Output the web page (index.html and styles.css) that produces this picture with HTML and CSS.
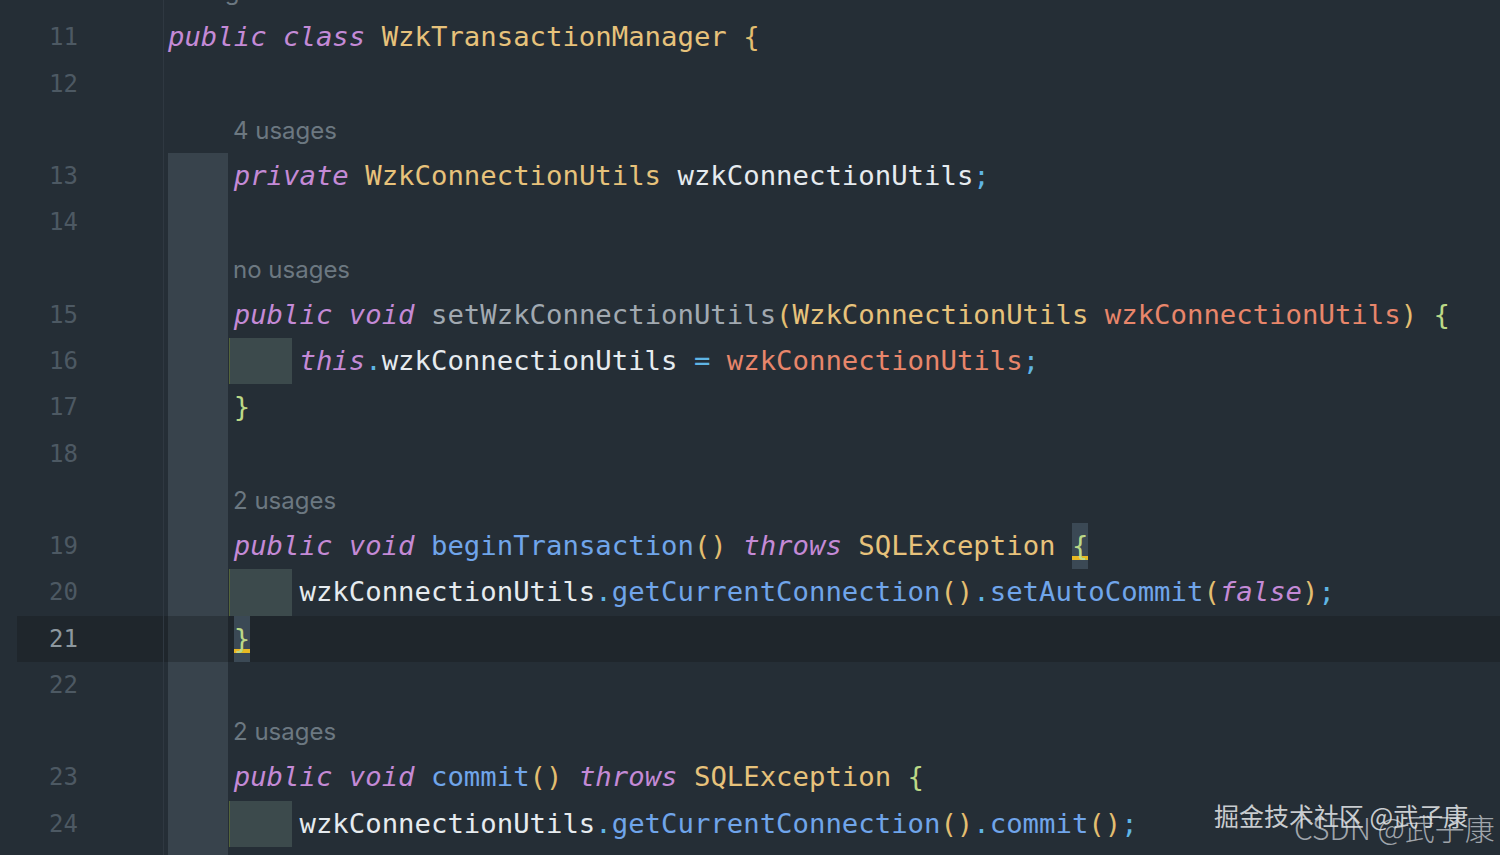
FILE: index.html
```html
<!DOCTYPE html>
<html>
<head>
<meta charset="utf-8">
<link rel="stylesheet" href="styles.css">
</head>
<body>
<div class="editor">
  <div class="row"><div class="ln"></div><div class="sep"></div><div class="code hint0"><span class="hint">1 usage</span></div></div>
  <div class="row"><div class="ln">11</div><div class="sep"></div><div class="code"><span class="k">public</span> <span class="k">class</span> <span class="c">WzkTransactionManager</span> <span class="y">{</span></div></div>
  <div class="row"><div class="ln">12</div><div class="sep"></div><div class="code"></div></div>
  <div class="row"><div class="ln"></div><div class="sep"></div><div class="code hint1"><span class="hint">4 usages</span></div></div>
  <div class="row"><div class="ln">13</div><div class="sep"></div><div class="code ind">    <span class="k">private</span> <span class="c">WzkConnectionUtils</span> <span class="f">wzkConnectionUtils</span><span class="p">;</span></div></div>
  <div class="row"><div class="ln">14</div><div class="sep"></div><div class="code ind"></div></div>
  <div class="row"><div class="ln"></div><div class="sep"></div><div class="code ind hint1"><span class="hint">no usages</span></div></div>
  <div class="row"><div class="ln">15</div><div class="sep"></div><div class="code ind">    <span class="k">public</span> <span class="k">void</span> <span class="g">setWzkConnectionUtils</span><span class="y">(</span><span class="c">WzkConnectionUtils</span> <span class="a">wzkConnectionUtils</span><span class="y">)</span> <span class="b">{</span></div></div>
  <div class="row"><div class="ln">16</div><div class="sep"></div><div class="code ind box">        <span class="k">this</span><span class="p">.</span><span class="f">wzkConnectionUtils</span> <span class="p">=</span> <span class="a">wzkConnectionUtils</span><span class="p">;</span></div></div>
  <div class="row"><div class="ln">17</div><div class="sep"></div><div class="code ind">    <span class="b">}</span></div></div>
  <div class="row"><div class="ln">18</div><div class="sep"></div><div class="code ind"></div></div>
  <div class="row"><div class="ln"></div><div class="sep"></div><div class="code ind hint1"><span class="hint">2 usages</span></div></div>
  <div class="row"><div class="ln">19</div><div class="sep"></div><div class="code ind">    <span class="k">public</span> <span class="k">void</span> <span class="m">beginTransaction</span><span class="y">()</span> <span class="k">throws</span> <span class="c">SQLException</span> <span class="match b">{</span></div></div>
  <div class="row"><div class="ln">20</div><div class="sep"></div><div class="code ind box">        <span class="f">wzkConnectionUtils</span><span class="p">.</span><span class="m">getCurrentConnection</span><span class="y">()</span><span class="p">.</span><span class="m">setAutoCommit</span><span class="y">(</span><span class="k">false</span><span class="y">)</span><span class="p">;</span></div></div>
  <div class="row cur"><div class="ln">21</div><div class="sep"></div><div class="code ind">    <span class="match b">}</span></div></div>
  <div class="row"><div class="ln">22</div><div class="sep"></div><div class="code ind"></div></div>
  <div class="row"><div class="ln"></div><div class="sep"></div><div class="code ind hint1"><span class="hint">2 usages</span></div></div>
  <div class="row"><div class="ln">23</div><div class="sep"></div><div class="code ind">    <span class="k">public</span> <span class="k">void</span> <span class="m">commit</span><span class="y">()</span> <span class="k">throws</span> <span class="c">SQLException</span> <span class="b">{</span></div></div>
  <div class="row"><div class="ln">24</div><div class="sep"></div><div class="code ind box">        <span class="f">wzkConnectionUtils</span><span class="p">.</span><span class="m">getCurrentConnection</span><span class="y">()</span><span class="p">.</span><span class="m">commit</span><span class="y">()</span><span class="p">;</span></div></div>
  <div class="row"><div class="ln"></div><div class="sep"></div><div class="code ind"></div></div>
</div>
<div class="wm wm-juejin">掘金技术社区 @武子康</div>
<div class="wm wm-csdn">CSDN @武子康</div>
</body>
</html>
```

FILE: styles.css
```css
html, body {
  margin: 0;
  padding: 0;
  background: #252e36;
  width: 1500px;
  height: 855px;
  overflow: hidden;
}
body {
  position: relative;
}
.editor {
  margin-top: -32px;
  display: flex;
  flex-direction: column;
}
.row {
  display: flex;
  height: 46.25px;
  flex: none;
}
.row.cur {
  background: linear-gradient(to right, transparent 17px, #1f262c 17px);
}
.ln {
  width: 78px;
  flex: none;
  text-align: right;
  padding-right: 85px;
  font-family: "DejaVu Sans Mono", monospace;
  font-size: 24px;
  line-height: 46.25px;
  color: #4d5963;
}
.cur .ln {
  color: #8d989f;
}
.sep {
  width: 1px;
  flex: none;
  background: #2f3841;
}
.code {
  flex: 1;
  padding-left: 4px;
  white-space: pre;
  font-family: "DejaVu Sans Mono", monospace;
  font-size: 27.3px;
  line-height: 46.25px;
  color: #e6ebef;
}
.code.ind {
  background: linear-gradient(to right, transparent 4px, #38434c 4px 64px, transparent 64px);
}
.cur .code.ind {
  background: linear-gradient(to right, transparent 4px, #2c353c 4px 64px, transparent 64px);
}
.code.ind.box {
  background: linear-gradient(to right, transparent 4px, #38434c 4px 64px, transparent 64px 65px, #55653c 65px 66px, #3c4a4c 66px 128px, transparent 128px);
}
.hint0 {
  padding-left: 4px;
}
.hint1 {
  padding-left: 69px;
}
.hint {
  font-family: Inter, "Noto Sans", sans-serif;
  font-size: 24px;
  color: #6c7881;
  white-space: nowrap;
}
.k { color: #c48ad6; font-style: italic; }
.c { color: #e7c27b; }
.f { color: #e6ebef; }
.p { color: #5fb5e4; }
.y { color: #e3be70; }
.b { color: #bcd987; }
.m { color: #70a5ea; }
.g { color: #a1a9b1; }
.a { color: #e8866b; }
.match {
  display: inline-block;
  height: 46.25px;
  vertical-align: top;
  background: linear-gradient(to bottom, transparent 33px, #e8b923 33px 37px, transparent 37px), #3b4955;
}
.wm {
  position: absolute;
  white-space: nowrap;
  font-family: "Noto Sans CJK SC", "Noto Sans", sans-serif;
}
.wm-csdn {
  left: 1294px;
  top: 805px;
  font-size: 30px;
  font-weight: 300;
  color: rgba(200, 205, 210, 0.75);
}
.wm-juejin {
  left: 1214px;
  top: 797px;
  font-size: 25px;
  color: rgba(225, 228, 230, 0.88);
  z-index: 1;
}
```
